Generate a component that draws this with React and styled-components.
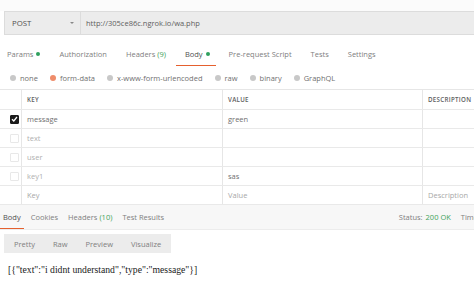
import styled, { createGlobalStyle } from "styled-components";

const Global = createGlobalStyle`
  body {
    margin: 0;
    background: #fff;
    font-family: "Open Sans", "Noto Sans", sans-serif;
  }
`;

const Page = styled.div`
  width: 474px;
  height: 284px;
  overflow: hidden;
  display: flex;
  flex-direction: column;
  background: #fff;
  color: #707070;
  font-size: 7.5px;
`;

const TopStrip = styled.div`
  height: 11px;
  background: #fbfbfb;
`;

const RequestBar = styled.div`
  display: flex;
  height: 22px;
  margin-left: 4px;
  background: #ececec;
  border: 1px solid #dcdcdc;
  border-right: none;
`;

const MethodSelect = styled.div`
  width: 62px;
  display: flex;
  align-items: center;
  justify-content: space-between;
  padding: 0 6px 0 7px;
  border-right: 1px solid #dcdcdc;
  color: #505050;
  font-size: 7.8px;
`;

const Caret = styled.span`
  width: 0;
  height: 0;
  border-left: 2px solid transparent;
  border-right: 2px solid transparent;
  border-top: 2.5px solid #888;
`;

const Url = styled.div`
  display: flex;
  align-items: center;
  padding-left: 5px;
  color: #606060;
`;

const Tabs = styled.div`
  display: flex;
  height: 22px;
  padding: 8px 0 0 7px;
  gap: 19px;
`;

const Tab = styled.div`
  display: flex;
  align-items: center;
  gap: 3px;
  position: relative;
  color: ${(p) => (p.$active ? "#505050" : "#808080")};

  &::after {
    content: "";
    display: ${(p) => (p.$active ? "block" : "none")};
    position: absolute;
    left: -9px;
    right: -6px;
    bottom: -1px;
    height: 1.5px;
    background: #e5602e;
  }
`;

const Dot = styled.span`
  width: 4px;
  height: 4px;
  border-radius: 50%;
  background: #2fa05e;
`;

const Count = styled.span`
  color: #3fa35a;
`;

const Modes = styled.div`
  display: flex;
  align-items: center;
  height: 22px;
  padding: 2px 0 0 10px;
  gap: 12px;
  color: #707070;
`;

const Mode = styled.div`
  display: flex;
  align-items: center;
  gap: 4px;
`;

const Radio = styled.span`
  width: 6px;
  height: 6px;
  border-radius: 50%;
  background: ${(p) => (p.$on ? "#ef8c6a" : "#c8c8c8")};
`;

const Table = styled.div`
  display: flex;
  flex-direction: column;
  border-top: 1px solid #e6e6e6;
`;

const Row = styled.div`
  display: grid;
  grid-template-columns: 22px 201px 200px 1fr;
  height: ${(p) => (p.$head ? "19px" : "18px")};
  border-bottom: 1px solid #e9e9e9;
`;

const Cell = styled.div`
  display: flex;
  align-items: center;
  padding-left: 5px;
  border-right: 1px solid #e6e6e6;
  white-space: nowrap;
  overflow: hidden;
  color: ${(p) => p.$color || "#707070"};
  font-size: ${(p) => (p.$head ? "6.2px" : "7.5px")};
  font-weight: ${(p) => (p.$head ? 600 : 400)};
  letter-spacing: ${(p) => (p.$head ? "0.3px" : "0")};
  &:last-child {
    border-right: none;
  }
`;

const CheckCell = styled.div`
  display: flex;
  align-items: center;
  justify-content: flex-end;
  padding-right: 2px;
  border-right: 1px solid #e6e6e6;
`;

const Box = styled.div`
  width: 9px;
  height: 9px;
  border-radius: 1px;
  display: flex;
  align-items: center;
  justify-content: center;
  background: ${(p) => (p.$checked ? "#1c1c1c" : "#fff")};
  border: 1px solid ${(p) => (p.$checked ? "#1c1c1c" : "#e8e8e8")};
  box-sizing: border-box;
`;

const ResponseBar = styled.div`
  display: flex;
  align-items: center;
  height: 24px;
  padding-left: 3px;
  background: #f7f7f7;
  border-bottom: 1px solid #ececec;
  gap: 10px;
`;

const ResTab = styled.div`
  position: relative;
  height: 100%;
  display: flex;
  align-items: center;
  color: ${(p) => (p.$active ? "#505050" : "#808080")};

  &::after {
    content: "";
    display: ${(p) => (p.$active ? "block" : "none")};
    position: absolute;
    left: -3px;
    right: -3px;
    bottom: 0;
    height: 1.5px;
    background: #e5602e;
  }
`;

const Status = styled.div`
  margin-left: auto;
  display: flex;
  gap: 3px;
  color: #808080;
  white-space: nowrap;
  margin-right: -4px;
`;

const Ok = styled.span`
  color: #3fa35a;
  margin-right: 7px;
`;

const ViewBar = styled.div`
  display: flex;
  align-items: center;
  align-self: flex-start;
  height: 19px;
  margin: 4px 0 0 4px;
  padding: 0 10px;
  gap: 18px;
  background: #ececec;
  color: #808080;
`;

const Output = styled.div`
  padding: 11px 0 0 8px;
  font-family: "Liberation Serif", "Times New Roman", serif;
  font-size: 9.7px;
  color: #1a1a1a;
`;

const rows = [
  { key: "message", value: "green", checked: true, dark: true },
  { key: "text", value: "" },
  { key: "user", value: "" },
  { key: "key1", value: "sas", valueDark: true },
];

export default function App() {
  return (
    <Page>
      <Global />
      <TopStrip />
      <RequestBar>
        <MethodSelect>
          POST <Caret />
        </MethodSelect>
        <Url>http://305ce86c.ngrok.io/wa.php</Url>
      </RequestBar>
      <Tabs>
        <Tab>
          Params <Dot />
        </Tab>
        <Tab>Authorization</Tab>
        <Tab>
          <span>
            Headers <Count>(9)</Count>
          </span>
        </Tab>
        <Tab $active>
          Body <Dot />
        </Tab>
        <Tab>Pre-request Script</Tab>
        <Tab>Tests</Tab>
        <Tab>Settings</Tab>
      </Tabs>
      <Modes>
        <Mode>
          <Radio /> none
        </Mode>
        <Mode>
          <Radio $on /> form-data
        </Mode>
        <Mode>
          <Radio /> x-www-form-urlencoded
        </Mode>
        <Mode>
          <Radio /> raw
        </Mode>
        <Mode>
          <Radio /> binary
        </Mode>
        <Mode>
          <Radio /> GraphQL
        </Mode>
      </Modes>
      <Table>
        <Row $head>
          <CheckCell />
          <Cell $head $color="#606060">KEY</Cell>
          <Cell $head $color="#606060">VALUE</Cell>
          <Cell $head $color="#606060">DESCRIPTION</Cell>
        </Row>
        {rows.map((r) => (
          <Row key={r.key}>
            <CheckCell>
              <Box $checked={r.checked}>
                {r.checked && (
                  <svg width="7" height="6" viewBox="0 0 7 6">
                    <path d="M1 3.2 L2.8 5 L6 1" stroke="#fff" strokeWidth="1.3" fill="none" />
                  </svg>
                )}
              </Box>
            </CheckCell>
            <Cell $color={r.dark ? "#707070" : "#b0b0b0"}>{r.key}</Cell>
            <Cell $color={r.dark || r.valueDark ? "#707070" : "#b0b0b0"}>{r.value}</Cell>
            <Cell />
          </Row>
        ))}
        <Row>
          <CheckCell />
          <Cell $color="#a8a8a8">Key</Cell>
          <Cell $color="#a8a8a8">Value</Cell>
          <Cell $color="#a8a8a8">Description</Cell>
        </Row>
      </Table>
      <ResponseBar>
        <ResTab $active>Body</ResTab>
        <ResTab>Cookies</ResTab>
        <ResTab>
          <span>
            Headers <Count>(10)</Count>
          </span>
        </ResTab>
        <ResTab>Test Results</ResTab>
        <Status>
          Status: <Ok>200 OK</Ok> Time
        </Status>
      </ResponseBar>
      <ViewBar>
        <span>Pretty</span>
        <span>Raw</span>
        <span>Preview</span>
        <span>Visualize</span>
      </ViewBar>
      <Output>[{'{'}"text":"i didnt understand","type":"message"{'}'}]</Output>
    </Page>
  );
}
